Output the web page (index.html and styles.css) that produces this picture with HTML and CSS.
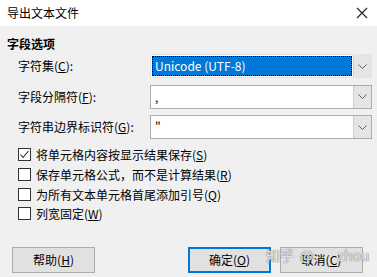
FILE: index.html
```html
<!DOCTYPE html>
<html lang="zh">
<head>
<meta charset="utf-8">
<link rel="stylesheet" href="styles.css">
</head>
<body>
<div class="dialog">
  <div class="titlebar">
    <span class="title">导出文本文件</span>
    <svg class="close" width="12" height="12" viewBox="0 0 12 12"><path d="M1 1L11 11M11 1L1 11" stroke="#222" stroke-width="1.1" fill="none"/></svg>
  </div>
  <div class="body">
    <div class="section">字段选项</div>
    <div class="fields">
      <div class="label">字符集(<u>C</u>):</div>
      <div class="combo focused">
        <div class="value"><span class="sel">Unicode (UTF-8)</span></div>
        <div class="drop"><svg width="9" height="5" viewBox="0 0 9 5"><path d="M0.5 0.5L4.5 4.5L8.5 0.5" stroke="#606060" fill="none"/></svg></div>
      </div>
      <div class="label">字段分隔符(<u>F</u>):</div>
      <div class="combo">
        <div class="value">,</div>
        <div class="drop"><svg width="9" height="5" viewBox="0 0 9 5"><path d="M0.5 0.5L4.5 4.5L8.5 0.5" stroke="#606060" fill="none"/></svg></div>
      </div>
      <div class="label">字符串边界标识符(<u>G</u>):</div>
      <div class="combo">
        <div class="value">"</div>
        <div class="drop"><svg width="9" height="5" viewBox="0 0 9 5"><path d="M0.5 0.5L4.5 4.5L8.5 0.5" stroke="#606060" fill="none"/></svg></div>
      </div>
    </div>
    <div class="checks">
      <div class="check"><span class="box"><svg width="11" height="11" viewBox="0 0 11 11"><path d="M1.5 5.5L4 8.5L9.5 2" stroke="#222" stroke-width="1.1" fill="none"/></svg></span>将单元格内容按显示结果保存(<u>S</u>)</div>
      <div class="check"><span class="box"></span>保存单元格公式，而不是计算结果(<u>R</u>)</div>
      <div class="check"><span class="box"></span>为所有文本单元格首尾添加引号(<u>Q</u>)</div>
      <div class="check"><span class="box"></span>列宽固定(<u>W</u>)</div>
    </div>
    <div class="buttons">
      <div class="btn">帮助(<u>H</u>)</div>
      <div class="right">
        <div class="btn default">确定(<u>O</u>)</div>
        <div class="btn">取消(<u>C</u>)</div>
      </div>
    </div>
  </div>
  <div class="watermark"><span>知乎</span><span>@</span><span class="wm-id">zhou</span></div>
</div>
</body>
</html>
```
FILE: styles.css
```css
* { box-sizing: border-box; }
html, body { margin: 0; padding: 0; }
body {
  width: 377px;
  height: 277px;
  overflow: hidden;
  background: #f0f0f0;
  font-family: "Microsoft YaHei", "Noto Sans CJK SC", "Noto Sans", sans-serif;
  font-size: 12px;
  color: #000;
}
u { text-decoration: underline; text-underline-offset: 1px; }
.dialog { position: relative; width: 377px; height: 277px; }
.titlebar {
  height: 26px;
  background: #fff;
  display: flex;
  align-items: center;
  justify-content: space-between;
  padding: 0 9px 1px 7px;
}
.title { font-size: 12px; color: #000; }
.body { padding: 0 8px 0 7px; }
.section {
  font-weight: bold;
  font-size: 12px;
  height: 28px;
  line-height: 18px;
  padding-top: 9px;
}
.fields {
  display: grid;
  grid-template-columns: 132px 222px;
  grid-auto-rows: 24px;
  row-gap: 6.5px;
  margin-left: 11px;
  align-items: center;
}
.label { font-size: 12px; line-height: 24px; }
.combo {
  display: flex;
  height: 24px;
  background: #fff;
  border: 1px solid #acacac;
}
.combo.focused { border-color: #e3e3e3; }
.value {
  flex: 1;
  font-size: 12px;
  line-height: 20px;
  padding: 1px 1px 1px 4px;
}
.combo.focused .value { padding: 1px; }
.sel {
  display: block;
  height: 100%;
  background: #0078d7;
  color: #fff;
  outline: 1px dotted #000;
  outline-offset: -1px;
  padding-left: 3px;
  line-height: 20px;
}
.drop {
  width: 18px;
  background: #e5e5e5;
  border-left: 1px solid #cfcfcf;
  display: flex;
  align-items: center;
  justify-content: center;
}
.checks { margin-top: 6px; margin-left: 11px; }
.check {
  display: flex;
  align-items: center;
  height: 19.7px;
  font-size: 12px;
}
.box {
  width: 13px;
  height: 13px;
  border: 1px solid #333;
  background: #fff;
  margin-right: 5px;
  display: flex;
  align-items: center;
  justify-content: center;
}
.buttons {
  display: flex;
  justify-content: space-between;
  margin-top: 23px;
  padding-left: 5px;
  padding-right: 6px;
}
.right { display: flex; gap: 9px; }
.btn {
  width: 83px;
  height: 26px;
  background: #e1e1e1;
  border: 1px solid #adadad;
  display: flex;
  align-items: center;
  justify-content: center;
  font-size: 12px;
}
.btn.default { border: 2px solid #0078d7; }
.watermark {
  position: absolute;
  left: 266px;
  top: 245px;
  display: flex;
  gap: 6px;
  font-size: 14px;
  color: rgba(255,255,255,0.8);
  text-shadow: 0 0 1px #777, 0 0 1px #777;
}
.wm-id { margin-left: 18px; }
```
